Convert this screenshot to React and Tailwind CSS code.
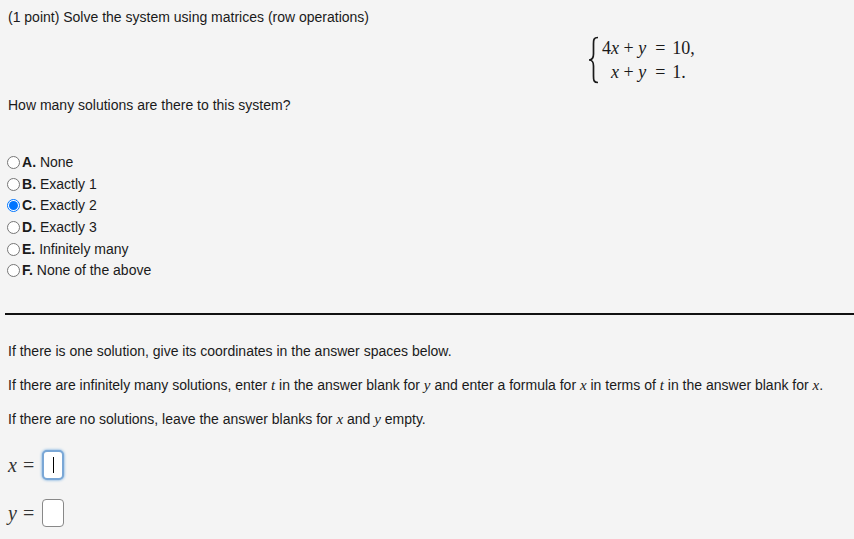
import React from 'react';

const options = [
  { key: 'A', label: 'None' },
  { key: 'B', label: 'Exactly 1' },
  { key: 'C', label: 'Exactly 2', checked: true },
  { key: 'D', label: 'Exactly 3' },
  { key: 'E', label: 'Infinitely many' },
  { key: 'F', label: 'None of the above' },
];

const serif = { fontFamily: '"Liberation Serif", "DejaVu Serif", serif' };

const V = ({ children }) => (
  <span className="italic text-[15px]" style={serif}>{children}</span>
);

const Radio = ({ checked }) => (
  <span className={`inline-block w-[13px] h-[13px] rounded-full border mr-[2px] shrink-0 ${checked ? 'border-[#0075ff] bg-white flex items-center justify-center' : 'border-[#767676] bg-white'}`}>
    {checked && <span className="block w-[9px] h-[9px] rounded-full bg-[#0075ff] m-[1px]" />}
  </span>
);

export default function App() {
  return (
    <div className="w-[854px] h-[539px] bg-[#f4f4f4] text-[14px] text-[#1a1a1a] overflow-hidden" style={{ fontFamily: '"Liberation Sans", Arial, sans-serif' }}>
      <div className="pl-[8px] pt-[9px]">
        <p className="leading-[16px]">(1 point) Solve the system using matrices (row operations)</p>

        <div className="flex pl-[580px] mt-[11px] h-[48px]" style={serif}>
          <div className="flex items-center">
            <svg width="12" height="48" viewBox="0 0 12 48" className="mr-[2px]">
              <path d="M10 1.5 C5.5 1.5 5.5 4 5.5 8 L5.5 18 C5.5 22 4.5 24 1 24 C4.5 24 5.5 26 5.5 30 L5.5 40 C5.5 44 5.5 46.5 10 46.5" fill="none" stroke="#1a1a1a" strokeWidth="1.7" />
            </svg>
            <div className="grid grid-cols-[auto_auto] gap-x-[9px] text-[18px] leading-[24px]">
              <span className="text-right">4<i>x</i>&nbsp;+&nbsp;<i>y</i></span>
              <span>=<span className="ml-[7px]">10,</span></span>
              <span className="text-right"><i>x</i>&nbsp;+&nbsp;<i>y</i></span>
              <span>=<span className="ml-[7px]">1.</span></span>
            </div>
          </div>
        </div>

        <p className="mt-[13px] leading-[16px]">How many solutions are there to this system?</p>

        <div className="mt-[39px] flex flex-col">
          {options.map((o) => (
            <label key={o.key} className="flex items-center h-[21.6px] -ml-[1px]">
              <Radio checked={o.checked} />
              <span><b>{o.key}.</b> {o.label}</span>
            </label>
          ))}
        </div>
      </div>

      <div className="ml-[5px] mt-[31px] border-t-2 border-[#111]" />

      <div className="pl-[8px] pt-[28px]">
        <p className="leading-[16px]">If there is one solution, give its coordinates in the answer spaces below.</p>
        <p className="leading-[16px] mt-[18px]">
          If there are infinitely many solutions, enter <V>t</V> in the answer blank for <V>y</V> and enter a formula for <V>x</V> in terms of <V>t</V> in the answer blank for <V>x</V>.
        </p>
        <p className="leading-[16px] mt-[18px]">If there are no solutions, leave the answer blanks for <V>x</V> and <V>y</V> empty.</p>

        <div className="mt-[23px] flex items-center">
          <span className="text-[20px] text-[#333] flex items-center" style={serif}>
            <i>x</i><span className="ml-[6px] mr-[8px]">=</span>
          </span>
          <div className="w-[22px] h-[30px] rounded-[5px] border-2 border-[#7aa7d6] bg-white flex items-center justify-center shadow-[0_0_3px_#5b9dd9]">
            <span className="block w-[1px] h-[16px] bg-black" />
          </div>
        </div>

        <div className="mt-[18px] flex items-center">
          <span className="text-[20px] text-[#333] flex items-center" style={serif}>
            <i>y</i><span className="ml-[6px] mr-[8px]">=</span>
          </span>
          <div className="w-[22px] h-[28px] rounded-[4px] border border-[#888] bg-white" />
        </div>
      </div>
    </div>
  );
}
